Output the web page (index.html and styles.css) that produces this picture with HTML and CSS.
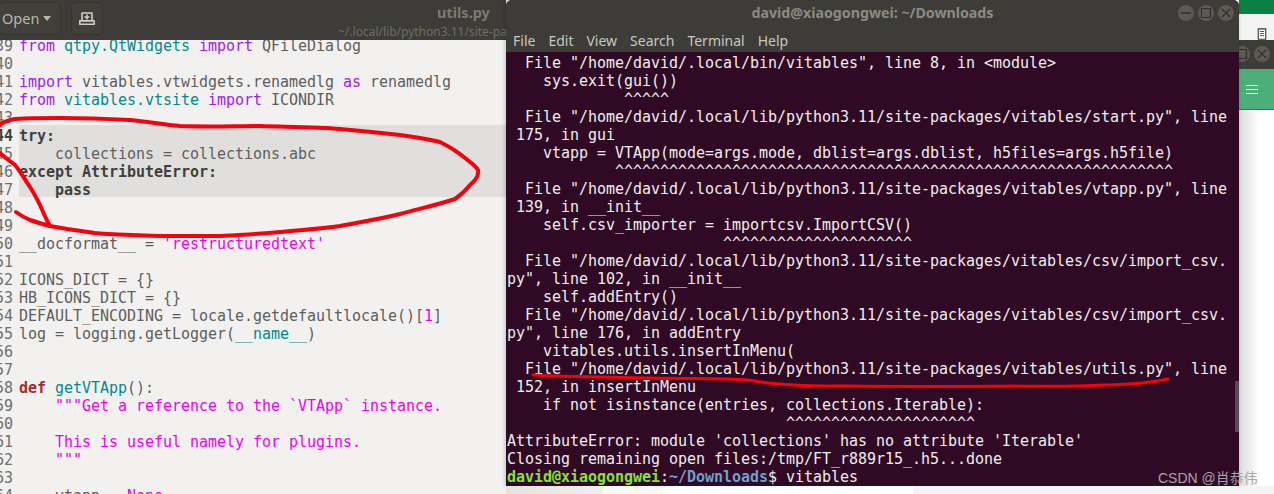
FILE: index.html
```html
<!DOCTYPE html>
<html lang="en">
<head>
<meta charset="utf-8">
<title>utils.py and terminal</title>
<link rel="stylesheet" href="styles.css">
</head>
<body>
<main class="desktop">
  <section class="backwin">
    <div class="back-top"></div>
    <div class="back-white"><svg class="doc-icon" viewBox="0 0 12 14"><path d="M1.500 .8h9v12.400h-9z" fill="#fff" stroke="#333" stroke-width="1.300"/><path d="M3.500 4h5M3.500 6.500h5M3.500 9h5" stroke="#333"/></svg></div>
    <div class="back-title">
      <span class="wbtn back-max"><svg viewBox="0 0 16 16"><path d="M3.500 3.500h9v9h-9z" fill="none" stroke="#2f2f2b" stroke-width="1.200"/></svg></span>
      <span class="wbtn back-close"><svg viewBox="0 0 16 16"><path d="M4 4l8 8M12 4l-8 8" stroke="#2f2f2b" stroke-width="1.200"/></svg></span>
    </div>
    <div class="back-green"><span class="burger"><i></i><i></i><i></i></span></div>
    <div class="back-rest"></div>
    <div class="back-foot"></div>
  </section>

  <section class="editor">
    <header class="ed-head">
      <button class="btn open">Open<span class="caret"></span></button>
      <button class="btn newtab"><svg viewBox="0 0 16 13"><path d="M3 1h10v8H3zM.8 8.800h14.400v3.400H.8z" fill="none" stroke="#d0cec6" stroke-width="1.600" stroke-linejoin="round"/><path d="M8 2.500v5M5.500 5h5" stroke="#d0cec6" stroke-width="1.600"/></svg></button>
      <div class="ed-title"><b>utils.py</b><small>~/.local/lib/python3.11/site-pa</small></div>
    </header>
    <div class="code">
<div class="ln"><span class="num">39</span><span class="kw">from</span> <span class="mod">qtpy.QtWidgets</span> <span class="kw">import</span> QFileDialog</div>
<div class="ln"><span class="num">40</span></div>
<div class="ln"><span class="num">41</span><span class="kw">import</span> vitables.vtwidgets.renamedlg <span class="kw">as</span> renamedlg</div>
<div class="ln"><span class="num">42</span><span class="kw">from</span> <span class="mod">vitables.vtsite</span> <span class="kw">import</span> ICONDIR</div>
<div class="ln"><span class="num">43</span></div>
<div class="ln hl"><span class="num"><b>44</b></span><b>try:</b></div>
<div class="ln hl"><span class="num">45</span>    collections = collections.abc</div>
<div class="ln hl"><span class="num">46</span><b>except AttributeError:</b></div>
<div class="ln hl"><span class="num">47</span>    <b>pass</b></div>
<div class="ln"><span class="num">48</span></div>
<div class="ln"><span class="num">49</span></div>
<div class="ln"><span class="num">50</span>__docformat__ = <span class="str">'restructuredtext'</span></div>
<div class="ln"><span class="num">51</span></div>
<div class="ln"><span class="num">52</span>ICONS_DICT = {}</div>
<div class="ln"><span class="num">53</span>HB_ICONS_DICT = {}</div>
<div class="ln"><span class="num">54</span>DEFAULT_ENCODING = locale.getdefaultlocale()[<span class="str">1</span>]</div>
<div class="ln"><span class="num">55</span>log = logging.getLogger(<span class="mod">__name__</span>)</div>
<div class="ln"><span class="num">56</span></div>
<div class="ln"><span class="num">57</span></div>
<div class="ln"><span class="num">58</span><b class="def">def</b> <span class="mod">getVTApp</span>():</div>
<div class="ln"><span class="num">59</span>    <span class="str">"""Get a reference to the `VTApp` instance.</span></div>
<div class="ln"><span class="num">60</span></div>
<div class="ln"><span class="num">61</span>    <span class="str">This is useful namely for plugins.</span></div>
<div class="ln"><span class="num">62</span>    <span class="str">"""</span></div>
<div class="ln"><span class="num">63</span></div>
<div class="ln"><span class="num">64</span>    vtapp = <span class="str">None</span></div>
    </div>
  </section>

  <section class="terminal">
    <header class="term-head">
      <div class="term-title">david@xiaogongwei: ~/Downloads</div>
      <div class="wbtns">
        <span class="wbtn"><svg viewBox="0 0 16 16"><path d="M3 8h10" stroke="#2f2f2b" stroke-width="1.400"/></svg></span>
        <span class="wbtn"><svg viewBox="0 0 16 16"><path d="M3.500 3.500h9v9h-9z" fill="none" stroke="#2f2f2b" stroke-width="1.200"/></svg></span>
        <span class="wbtn"><svg viewBox="0 0 16 16"><path d="M4 4l8 8M12 4l-8 8" stroke="#2f2f2b" stroke-width="1.200"/></svg></span>
      </div>
    </header>
    <nav class="menu"><span>File</span><span>Edit</span><span>View</span><span>Search</span><span>Terminal</span><span>Help</span></nav>
    <div class="term-body">
<div class="tl">  File "/home/david/.local/bin/vitables", line 8, in &lt;module&gt;</div>
<div class="tl">    sys.exit(gui())</div>
<div class="tl">             ^^^^^</div>
<div class="tl">  File "/home/david/.local/lib/python3.11/site-packages/vitables/start.py", line</div>
<div class="tl"> 175, in gui</div>
<div class="tl">    vtapp = VTApp(mode=args.mode, dblist=args.dblist, h5files=args.h5file)</div>
<div class="tl">            ^^^^^^^^^^^^^^^^^^^^^^^^^^^^^^^^^^^^^^^^^^^^^^^^^^^^^^^^^^^^^^</div>
<div class="tl">  File "/home/david/.local/lib/python3.11/site-packages/vitables/vtapp.py", line</div>
<div class="tl"> 139, in __init__</div>
<div class="tl">    self.csv_importer = importcsv.ImportCSV()</div>
<div class="tl">                        ^^^^^^^^^^^^^^^^^^^^^</div>
<div class="tl">  File "/home/david/.local/lib/python3.11/site-packages/vitables/csv/import_csv.</div>
<div class="tl">py", line 102, in __init__</div>
<div class="tl">    self.addEntry()</div>
<div class="tl">  File "/home/david/.local/lib/python3.11/site-packages/vitables/csv/import_csv.</div>
<div class="tl">py", line 176, in addEntry</div>
<div class="tl">    vitables.utils.insertInMenu(</div>
<div class="tl">  File "/home/david/.local/lib/python3.11/site-packages/vitables/utils.py", line</div>
<div class="tl"> 152, in insertInMenu</div>
<div class="tl">    if not isinstance(entries, collections.Iterable):</div>
<div class="tl">                               ^^^^^^^^^^^^^^^^^^^^^</div>
<div class="tl">AttributeError: module 'collections' has no attribute 'Iterable'</div>
<div class="tl">Closing remaining open files:/tmp/FT_r889r15_.h5...done</div>
<div class="tl"><span class="pg">david@xiaogongwei</span>:<span class="pb">~/Downloads</span>$ vitables</div>
    </div>
    <div class="scroll"></div>
  </section>

  <div class="below"><span class="below-a"></span><span class="below-b"></span><span class="below-c"></span><span class="below-d"></span></div>

  <svg class="ink" viewBox="0 0 1274 494">
    <path d="M0 125C4 121 9 120 15 119C30 118 45 118 60 118C85 118 110 119 130 120C150 122 165 125 180 126C210 127 235 126 260 126C290 127 315 127 340 129C362 131 382 133 400 135C415 137 428 139 440 142C450 147 458 152 465 158C471 163 476 166 478 170C479 176 475 181 470 185C466 190 461 195 455 199C437 205 418 209 400 214C380 219 360 222 340 226C320 229 300 230 280 232C260 234 240 235 220 236C200 236 180 236 160 236C138 235 116 235 95 233C80 231 65 229 50 226C42 224 36 222 30 220C25 218 20 215 16 212"/>
    <path d="M0 153C5 158 10 161 15 165C21 172 25 180 30 187C34 193 37 199 40 205C43 212 46 219 50 226"/>
    <path class="thin" d="M533 375C570 377 610 377 650 378C690 379 725 378 748 380C770 384 790 386 850 386C920 387 990 386 1070 386C1110 385 1140 385 1168 379"/>
  </svg>

  <div class="mark">CSDN @肖恭伟</div>
</main>
</body>
</html>
```

FILE: styles.css
```css
* { box-sizing: border-box; }
html, body { margin: 0; height: 100%; overflow: hidden; }
body { background: #f2f1f0; }
.desktop { position: relative; width: 1274px; height: 494px; overflow: hidden; background: #f2f1f0; }

.editor { position: absolute; left: 0; top: 0; width: 506px; height: 494px; background: #f2f1f0; overflow: hidden; }
.ed-head { position: relative; height: 40px; background: #3d3c38; display: flex; align-items: flex-start; gap: 10px; padding-top: 2px; }
.btn { height: 33px; border: 1px solid #353430; border-radius: 5px; background: #403f3a; color: #b9b6ac; font: 14.500px/31px "Noto Sans", sans-serif; padding: 0; display: flex; align-items: center; }
.open { width: 62px; margin-left: -1px; gap: 4px; padding-left: 2px; }
.caret { width: 0; height: 0; border: 4.500px solid transparent; border-top: 5px solid #b9b6ac; border-bottom: 0; }
.newtab { width: 32px; justify-content: center; }
.newtab svg { width: 16px; height: 13px; }
.ed-title { position: absolute; left: 338px; top: 3px; width: 168px; white-space: nowrap; overflow: hidden; display: flex; flex-direction: column; color: #7c7a73; }
.ed-title b { font: bold 14.500px/18px "Noto Sans", sans-serif; padding-left: 99px; }
.ed-title small { font: 12px/15px "Noto Sans", sans-serif; color: #6f6d66; margin-top: 3px; }
.code { font: 15px/22px "DejaVu Sans Mono", monospace; letter-spacing: -.03px; color: #5e5e5c; margin-top: -5px; }
.ln { height: 18px; white-space: pre; }
.num { display: inline-block; width: 19px; height: 18px; text-align: right; padding-right: 6px; color: #6f6f6c; overflow: hidden; direction: rtl; white-space: nowrap; vertical-align: top; }
.hl { background: #e1dfdd; margin-left: 19px; }
.hl .num { margin-left: -19px; background: #f2f1f0; }
.ln b { color: #3f3f3d; }
.kw { color: #a020f0; }
.mod { color: #008a8c; }
.str { color: #ee00ee; }
.ln b.def { color: #a52a2a; }

.terminal { position: absolute; left: 506px; top: 0; width: 733px; height: 486px; background: #300a24; border-radius: 6px 6px 0 0; overflow: hidden; box-shadow: -1px 0 4px rgba(0,0,0,.2); }
.term-head { height: 26px; background: #3d3c38; display: flex; justify-content: center; align-items: center; position: relative; }
.term-title { font: bold 14.200px/26px "Noto Sans", sans-serif; color: #8c8a82; }
.wbtns { position: absolute; right: 5px; top: 5px; display: flex; gap: 4px; }
.wbtn { width: 16px; height: 16px; border-radius: 50%; background: #5b5a55; display: block; }
.wbtn svg { display: block; width: 16px; height: 16px; }
.menu { height: 26px; background: #3d3c38; display: flex; gap: 13px; padding: 3px 0 0 7px; font: 14px/24px "Noto Sans", sans-serif; color: #c9c7bf; }
.term-body { padding: 2px 0 0 1px; font: 15px/18px "DejaVu Sans Mono", monospace; letter-spacing: -.03px; color: #eeeeec; }
.tl { height: 18px; white-space: pre; }
.pg { color: #8ae234; font-weight: bold; }
.pb { color: #729fcf; font-weight: bold; }
.scroll { position: absolute; right: 0; top: 381px; width: 4px; height: 51px; background: #5a4a55; }

.backwin { position: absolute; left: 1239px; top: 0; width: 35px; height: 494px; background: #fff; display: flex; flex-direction: column; }
.back-top { height: 14px; background: #0b8043; }
.back-white { height: 26px; background: #f3f3f3; position: relative; }
.doc-icon { position: absolute; left: 18px; top: 14px; width: 10px; height: 12px; }
.back-title { height: 29px; background: #3d3c38; position: relative; }
.back-max { position: absolute; left: -5px; top: 6px; }
.back-close { position: absolute; left: 15px; top: 6px; }
.back-green { height: 41px; background: #4caf7a; border-bottom: 1px solid #2d7a50; display: flex; align-items: center; }
.burger { display: flex; flex-direction: column; gap: 3px; margin-left: 7px; }
.burger i { display: block; width: 12px; height: 1px; background: #fff; }
.back-rest { flex: 1; background: linear-gradient(90deg, #dcdcdc, #fff 20px); }
.back-foot { height: 8px; background: #f3f3f3; }

.below { position: absolute; left: 506px; top: 486px; width: 733px; height: 8px; display: flex; }
.below-a { width: 97px; background: linear-gradient(90deg, #e4e3e2, #f0efee); }
.below-b { width: 60px; background: #f8f8f8; }
.below-c { width: 250px; background: #fff; }
.below-d { flex: 1; background: #f3f3f3; }

.ink { position: absolute; left: 0; top: 0; width: 1274px; height: 494px; fill: none; stroke: #f5000c; stroke-width: 4; stroke-linecap: round; stroke-linejoin: round; pointer-events: none; }
.ink .thin { stroke-width: 3; }
.mark { position: absolute; left: 1158px; top: 469px; font: 14px/18px "Liberation Sans", "Noto Sans CJK SC", sans-serif; color: #a9a5a8; white-space: nowrap; }
```
